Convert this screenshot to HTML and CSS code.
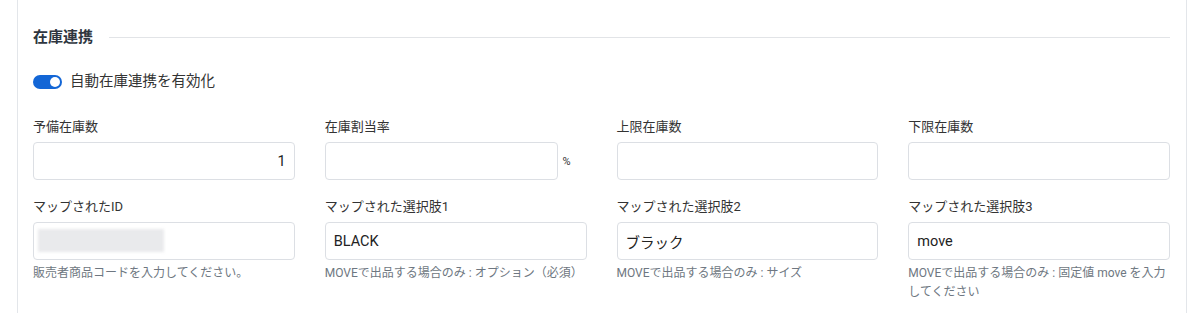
FILE: index.html
```html
<!DOCTYPE html>
<html lang="ja">
<head>
<meta charset="utf-8">
<link rel="stylesheet" href="styles.css">
</head>
<body>
<div class="card">
  <div class="section-head">
    <h2 class="section-title">在庫連携</h2>
    <div class="section-rule"></div>
  </div>
  <div class="toggle-row">
    <span class="switch"><span class="knob"></span></span>
    <span class="toggle-label">自動在庫連携を有効化</span>
  </div>
  <div class="grid">
    <div class="field">
      <label class="label">予備在庫数</label>
      <div class="input align-right">1</div>
    </div>
    <div class="field">
      <label class="label">在庫割当率</label>
      <div class="input-group">
        <div class="input"></div>
        <span class="suffix">%</span>
      </div>
    </div>
    <div class="field">
      <label class="label">上限在庫数</label>
      <div class="input"></div>
    </div>
    <div class="field">
      <label class="label">下限在庫数</label>
      <div class="input"></div>
    </div>
    <div class="field">
      <label class="label">マップされたID</label>
      <div class="input"><span class="blurred"></span></div>
      <p class="help">販売者商品コードを入力してください。</p>
    </div>
    <div class="field">
      <label class="label">マップされた選択肢1</label>
      <div class="input">BLACK</div>
      <p class="help">MOVEで出品する場合のみ : オプション（必須）</p>
    </div>
    <div class="field">
      <label class="label">マップされた選択肢2</label>
      <div class="input">ブラック</div>
      <p class="help">MOVEで出品する場合のみ : サイズ</p>
    </div>
    <div class="field">
      <label class="label">マップされた選択肢3</label>
      <div class="input">move</div>
      <p class="help">MOVEで出品する場合のみ : 固定値 move を入力してください</p>
    </div>
  </div>
</div>
</body>
</html>
```
FILE: styles.css
```css
html, body {
  margin: 0;
  padding: 0;
  background: #ffffff;
  height: 313px;
  overflow: hidden;
}
body {
  font-family: Roboto, "Noto Sans CJK JP", sans-serif;
  color: #333333;
}
.card {
  margin-left: 17px;
  width: 1170px;
  height: 313px;
  box-sizing: border-box;
  border-left: 1px solid #e3e6ea;
  border-right: 1px solid #e3e6ea;
  padding: 27px 16px 0 15px;
}
.section-head {
  display: flex;
  align-items: center;
  gap: 16px;
  height: 20px;
}
.section-title {
  margin: 0;
  font-size: 15px;
  font-weight: 700;
  line-height: 20px;
  color: #2f3640;
}
.section-rule {
  flex: 1;
  border-top: 1px solid #e2e4e7;
}
.toggle-row {
  margin-top: 25px;
  display: flex;
  align-items: center;
  height: 20px;
  gap: 8px;
}
.switch {
  width: 29px;
  height: 14px;
  border-radius: 7px;
  background: #1366d6;
  position: relative;
  display: inline-block;
}
.knob {
  position: absolute;
  right: 2px;
  top: 2px;
  width: 10px;
  height: 10px;
  border-radius: 50%;
  background: #ffffff;
}
.toggle-label {
  font-size: 14.5px;
  line-height: 20px;
  color: #333;
}
.grid {
  margin-top: 26px;
  display: grid;
  grid-template-columns: repeat(4, 1fr);
  column-gap: 30px;
  row-gap: 18px;
  align-items: start;
}
.field {
  display: flex;
  flex-direction: column;
}
.label {
  font-size: 13px;
  line-height: 18px;
  height: 18px;
  margin-bottom: 6px;
  color: #333;
}
.input {
  height: 38px;
  box-sizing: border-box;
  border: 1px solid #dcdfe4;
  border-radius: 4px;
  background: #fff;
  padding: 0 8px;
  display: flex;
  align-items: center;
  font-size: 14.5px;
  color: #222;
  position: relative;
}
.align-right {
  justify-content: flex-end;
}
.input-group {
  display: flex;
  align-items: center;
}
.input-group .input {
  flex: 1;
}
.suffix {
  width: 29px;
  box-sizing: border-box;
  padding-left: 5px;
  font-size: 11px;
  color: #333;
}
.blurred {
  position: absolute;
  left: 4px;
  top: 6px;
  width: 126px;
  height: 23px;
  background: #e9eaec;
  filter: blur(1.5px);
}
.help {
  margin: 4px 0 0;
  font-size: 12px;
  line-height: 19px;
  color: #6e7781;
}
```
